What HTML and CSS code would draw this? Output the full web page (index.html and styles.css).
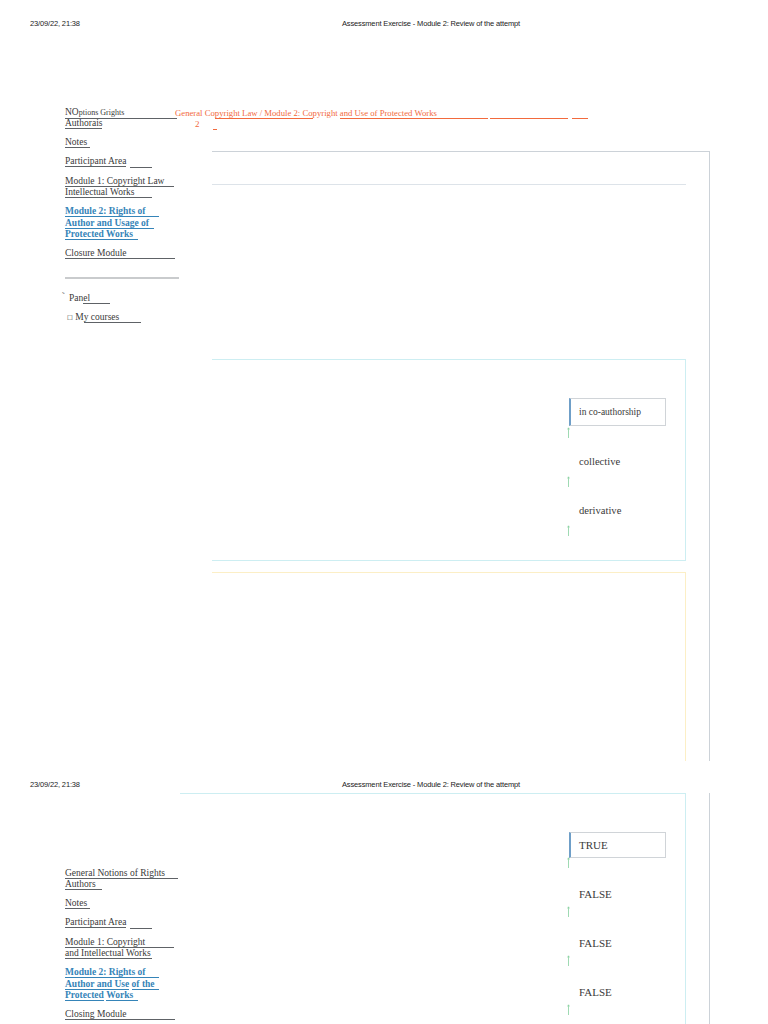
FILE: index.html
```html
<!DOCTYPE html>
<html lang="en">
<head>
<meta charset="utf-8">
<title>Assessment Exercise - Module 2: Review of the attempt</title>
<link rel="stylesheet" href="styles.css">
</head>
<body>
<div class="page p1">
  <header class="ph"><span class="date">23/09/22, 21:38</span><span class="title">Assessment Exercise - Module 2: Review of the attempt</span></header>
  <div class="layout">
    <nav class="side">
      <a class="item">
        <span class="ln"><span class="u w112">NO<span class="sm">ptions Grights</span></span></span>
        <span class="ln"><span class="u">Authorais</span></span>
      </a>
      <a class="item"><span class="ln"><span class="u w25">Notes</span></span></a>
      <a class="item"><span class="ln"><span class="u">Participant Area</span><span class="u tail w22"></span></span></a>
      <a class="item">
        <span class="ln"><span class="u w109">Module 1: Copyright Law</span></span>
        <span class="ln"><span class="u w87">Intellectual Works</span></span>
      </a>
      <a class="item active">
        <span class="ln"><span class="u w94">Module 2: Rights of</span></span>
        <span class="ln"><span class="u">Author and Us</span><span class="u">age of&nbsp;&nbsp;</span></span>
        <span class="ln"><span class="u">Protected Wor</span><span class="u">ks&nbsp;&nbsp;</span></span>
      </a>
      <a class="item"><span class="ln"><span class="u w110">Closure Module</span></span></a>
      <div class="sep"></div>
      <a class="item panel"><span class="ln"><span class="tilde">˜</span>Pan<span class="u w27">el</span></span></a>
      <a class="item courses"><span class="ln"><span class="box">☐</span> M<span class="u w57">y courses</span></span></a>
    </nav>
    <main class="main">
      <div class="crumb"><span>General Co</span><span class="cu">pyright Law / Module 2: Co</span><span>pyright </span><span class="cu w148">and Use of Protected Works</span><span class="cu w78 g2"></span><span class="cu w16 g4"></span></div>
      <div class="crumb2"><span class="n2">2</span><span class="dash"></span></div>
      <div class="region">
        <div class="rule"></div>
        <section class="card cyan">
          <div class="opts">
            <div class="opt sel">in co-authorship</div>
            <svg class="tick" viewBox="0 0 3 11"><path d="M1.5 1V11M0.6 2.4L1.5 0.8L2.4 2.4"/></svg>
            <div class="opt">collective</div>
            <svg class="tick" viewBox="0 0 3 11"><path d="M1.5 1V11M0.6 2.4L1.5 0.8L2.4 2.4"/></svg>
            <div class="opt">derivative</div>
            <svg class="tick" viewBox="0 0 3 11"><path d="M1.5 1V11M0.6 2.4L1.5 0.8L2.4 2.4"/></svg>
          </div>
        </section>
        <section class="card yellow"></section>
      </div>
    </main>
  </div>
</div>

<div class="page p2">
  <header class="ph"><span class="date">23/09/22, 21:38</span><span class="title">Assessment Exercise - Module 2: Review of the attempt</span></header>
  <div class="layout">
    <nav class="side">
      <a class="item">
        <span class="ln"><span class="u w113">General Notions of Rights</span></span>
        <span class="ln"><span class="u w37">Authors</span></span>
      </a>
      <a class="item"><span class="ln"><span class="u w25">Notes</span></span></a>
      <a class="item"><span class="ln"><span class="u">Participant Area</span><span class="u tail w22"></span></span></a>
      <a class="item">
        <span class="ln"><span class="u w109">Module 1: Copyright</span></span>
        <span class="ln"><span class="u w87">and Intellectual Works</span></span>
      </a>
      <a class="item active">
        <span class="ln"><span class="u w94">Module 2: Rights of</span></span>
        <span class="ln"><span class="u">Author and Use</span> <span class="u">of the&nbsp;&nbsp;</span></span>
        <span class="ln"><span class="u">Protected</span> <span class="u">Works&nbsp;&nbsp;</span></span>
      </a>
      <a class="item"><span class="ln"><span class="u w110">Closing Module</span></span></a>
    </nav>
    <main class="main">
      <div class="region cont">
        <section class="card cyan tall">
          <div class="opts big">
            <div class="opt sel">TRUE</div>
            <svg class="tick" viewBox="0 0 3 11"><path d="M1.5 1V11M0.6 2.4L1.5 0.8L2.4 2.4"/></svg>
            <div class="opt">FALSE</div>
            <svg class="tick" viewBox="0 0 3 11"><path d="M1.5 1V11M0.6 2.4L1.5 0.8L2.4 2.4"/></svg>
            <div class="opt">FALSE</div>
            <svg class="tick" viewBox="0 0 3 11"><path d="M1.5 1V11M0.6 2.4L1.5 0.8L2.4 2.4"/></svg>
            <div class="opt">FALSE</div>
            <svg class="tick" viewBox="0 0 3 11"><path d="M1.5 1V11M0.6 2.4L1.5 0.8L2.4 2.4"/></svg>
          </div>
        </section>
      </div>
    </main>
  </div>
</div>
</body>
</html>
```

FILE: styles.css
```css
* { box-sizing: border-box; }
html, body { margin: 0; padding: 0; background: #fff; }
body {
  width: 768px;
  font-family: "Liberation Serif", "Times New Roman", serif;
  color: #3a3a3a;
}
.page { height: 761px; overflow: hidden; }
.p2 { height: 263px; }

.ph {
  display: flex;
  height: 28px;
  padding: 19px 0 0 30px;
  font-family: "Liberation Sans", Arial, sans-serif;
  font-size: 7.5px;
  line-height: 9px;
  letter-spacing: -0.15px;
  color: #222;
}
.ph .date { width: 312px; }

.layout {
  display: grid;
  grid-template-columns: 110px 1fr;
  padding-left: 65px;
  align-items: start;
}
.p1 .layout { margin-top: 77px; }

/* sidebar */
.side {
  display: flex;
  flex-direction: column;
  gap: 7.7px;
  padding-top: 1.5px;
  font-size: 9.5px;
  line-height: 11.5px;
  white-space: nowrap;
}
.p2 .side { margin-top: 77px; }
.item { display: block; color: #3a3a3a; text-decoration: none; }
.item.active { color: #3584b8; font-weight: bold; }
.ln { display: block; height: 11.5px; }
.u {
  display: inline-block;
  line-height: 10px;
  border-bottom: 1px solid #5e6266;
}
.item.active .u { border-bottom-color: #3584b8; }
.sm { font-size: 8px; }
.tail { margin-left: 4px; height: 11px; vertical-align: bottom; }
.w22 { width: 22px; }
.w25 { min-width: 25px; }
.w27 { min-width: 27px; }
.w37 { min-width: 37px; }
.w57 { min-width: 57px; }
.w87 { min-width: 87px; }
.w94 { min-width: 94px; }
.w109 { min-width: 109px; }
.w110 { min-width: 110px; }
.w112 { min-width: 112px; }
.w113 { min-width: 113px; }

.sep {
  width: 114px;
  height: 2px;
  background: #c9cbcd;
  margin: 9px 0 4px;
}
.panel { margin-left: -3px; }
.tilde { display: inline-block; width: 7px; vertical-align: 3px; font-size: 8px; }
.courses { margin-left: 2px; margin-top: 2px; }
.box { font-family: "DejaVu Sans", sans-serif; font-size: 6.5px; }

/* main */
.crumb {
  padding-top: 3px;
  font-size: 8.7px;
  line-height: 11px;
  color: #f26a3d;
  white-space: nowrap;
}
.cu {
  display: inline-block;
  line-height: 10px;
  border-bottom: 1px solid #f26a3d;
}
.w148 { min-width: 148px; }
.w78 { width: 78px; height: 10px; vertical-align: bottom; }
.w16 { width: 16px; height: 10px; vertical-align: bottom; }
.g2 { margin-left: 2px; }
.g4 { margin-left: 4px; }
.crumb2 {
  display: flex;
  align-items: flex-end;
  height: 11px;
  padding-left: 20px;
  font-size: 9px;
  line-height: 11px;
  color: #f26a3d;
}
.dash { width: 4px; height: 1px; background: #f26a3d; margin: 0 0 0 13px; }

.region {
  margin: 21px 0 0 37px;
  width: 498px;
  min-height: 640px;
  border-top: 1px solid #ccd2d8;
  border-right: 1px solid #ccd2d8;
  padding: 32px 23px 0 0;
}
.region.cont {
  margin-top: 4px;
  border-top: none;
  padding-top: 0;
  min-height: 240px;
}
.rule { height: 1px; background: #dde3e9; }

.card { border: 1px solid transparent; border-left: none; }
.card.cyan {
  margin-top: 174px;
  height: 202px;
  border-color: #cdeef2;
  padding: 38px 19px 0 0;
  display: flex;
  justify-content: flex-end;
}
.card.cyan.tall { margin: 1px 0 0 -32px; height: 260px; border-bottom: none; }
.card.yellow {
  margin-top: 11px;
  height: 300px;
  border-color: #fcefc6;
}

.opts { width: 99px; display: flex; flex-direction: column; }
.opt {
  height: 28px;
  margin-left: 2px;
  display: flex;
  align-items: center;
  padding-left: 8px;
  font-size: 10.6px;
  color: #3a3a3a;
  border: 1px solid transparent;
  border-left: 2px solid transparent;
}
.opt.sel { font-size: 9.5px; border-color: #d0d4d8; border-left-color: #6f9fc8; }
.tick { width: 3px; height: 11px; margin: 1px 0 9px; fill: none; stroke: #86d19f; stroke-width: 0.8; }

.opts.big .opt { height: 26px; font-size: 11px; }
.opts.big .tick { margin: -1px 0 13px; }
```
